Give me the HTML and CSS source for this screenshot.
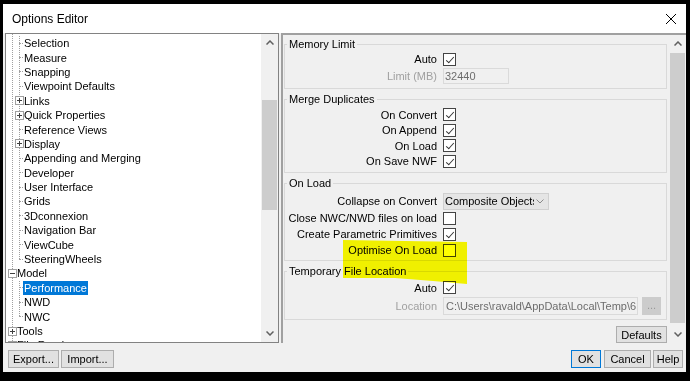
FILE: index.html
```html
<!DOCTYPE html>
<html lang="en">
<head>
  <meta charset="UTF-8" />
  <title>Options Editor</title>
  <link rel="stylesheet" href="styles.css">
</head>
<body>

<div class="window">
  <div class="titlebar">
    <span class="title">Options Editor</span>
    <svg class="close" width="10" height="10" viewBox="0 0 10 10">
      <path d="M0 0L10 10M10 0L0 10" stroke="#000" stroke-width="1" fill="none"/>
    </svg>
  </div>

  <div class="main">
    <div class="tree-panel">
      <div class="tree">
        <div class="children">
          <div class="row leaf">Selection</div>
          <div class="row leaf">Measure</div>
          <div class="row leaf">Snapping</div>
          <div class="row leaf">Viewpoint Defaults</div>
          <div class="row node"><span class="box plus"></span>Links</div>
          <div class="row node"><span class="box plus"></span>Quick Properties</div>
          <div class="row leaf">Reference Views</div>
          <div class="row node"><span class="box plus"></span>Display</div>
          <div class="row leaf">Appending and Merging</div>
          <div class="row leaf">Developer</div>
          <div class="row leaf">User Interface</div>
          <div class="row leaf">Grids</div>
          <div class="row leaf">3Dconnexion</div>
          <div class="row leaf">Navigation Bar</div>
          <div class="row leaf">ViewCube</div>
          <div class="row leaf">SteeringWheels</div>
        </div>
        <div class="row top"><span class="box minus"></span>Model</div>
        <div class="children">
          <div class="row leaf"><span class="sel">Performance</span></div>
          <div class="row leaf">NWD</div>
          <div class="row leaf">NWC</div>
        </div>
        <div class="row top"><span class="box plus"></span>Tools</div>
        <div class="row top"><span class="box plus"></span>File Readers</div>
      </div>
      <div class="vscroll">
        <div class="arrow">
          <svg width="8" height="5" viewBox="0 0 8 5"><polyline points="0.5,4.5 4,1 7.5,4.5" fill="none" stroke="#606060" stroke-width="1.5"/></svg>
        </div>
        <div class="thumb tree-thumb"></div>
        <div class="arrow down">
          <svg width="8" height="5" viewBox="0 0 8 5"><polyline points="0.5,0.5 4,4 7.5,0.5" fill="none" stroke="#606060" stroke-width="1.5"/></svg>
        </div>
      </div>
    </div>

    <div class="options-panel">
      <div class="options">
        <fieldset class="group memory">
          <legend>Memory Limit</legend>
          <div class="opt h16"><span class="lbl">Auto</span><span class="cb on"></span></div>
          <div class="opt h18"><span class="lbl off">Limit (MB)</span><span class="field short">32440</span></div>
        </fieldset>

        <fieldset class="group merge">
          <legend>Merge Duplicates</legend>
          <div class="opt"><span class="lbl">On Convert</span><span class="cb on"></span></div>
          <div class="opt"><span class="lbl">On Append</span><span class="cb on"></span></div>
          <div class="opt"><span class="lbl">On Load</span><span class="cb on"></span></div>
          <div class="opt"><span class="lbl">On Save NWF</span><span class="cb on"></span></div>
        </fieldset>

        <fieldset class="group onload">
          <legend>On Load</legend>
          <div class="opt h18">
            <span class="lbl">Collapse on Convert</span>
            <span class="select">
              <span class="select-text">Composite Objects</span>
              <svg width="8" height="5" viewBox="0 0 8 5"><polyline points="0.5,0.5 4,4 7.5,0.5" fill="none" stroke="#8a8a8a" stroke-width="1"/></svg>
            </span>
          </div>
          <div class="opt h16"><span class="lbl">Close NWC/NWD files on load</span><span class="cb"></span></div>
          <div class="opt h16"><span class="lbl">Create Parametric Primitives</span><span class="cb on"></span></div>
          <div class="opt h16"><span class="lbl">Optimise On Load</span><span class="cb"></span></div>
        </fieldset>

        <fieldset class="group temp">
          <legend>Temporary File Location</legend>
          <div class="opt h17"><span class="lbl">Auto</span><span class="cb on"></span></div>
          <div class="opt h20">
            <span class="lbl off">Location</span>
            <span class="field long">C:\Users\ravald\AppData\Local\Temp\6</span>
            <span class="browse">...</span>
          </div>
        </fieldset>

        <div class="defaults-row">
          <button class="btn defaults">Defaults</button>
        </div>
      </div>
      <div class="vscroll">
        <div class="arrow">
          <svg width="8" height="5" viewBox="0 0 8 5"><polyline points="0.5,4.5 4,1 7.5,4.5" fill="none" stroke="#606060" stroke-width="1.5"/></svg>
        </div>
        <div class="thumb options-thumb"></div>
        <div class="arrow down">
          <svg width="8" height="5" viewBox="0 0 8 5"><polyline points="0.5,0.5 4,4 7.5,0.5" fill="none" stroke="#606060" stroke-width="1.5"/></svg>
        </div>
      </div>
    </div>
  </div>

  <div class="footer">
    <button class="btn export">Export...</button>
    <button class="btn import">Import...</button>
    <span class="spacer"></span>
    <button class="btn ok">OK</button>
    <button class="btn cancel">Cancel</button>
    <button class="btn help">Help</button>
  </div>
</div>

<!-- yellow marker drawn over the screenshot -->
<svg class="highlight" width="125" height="46" viewBox="0 0 125 46">
  <polygon points="0,1 124,3 124,45 90,42 52,39 0,39" fill="#ffff00"/>
</svg>

</body>
</html>
```

FILE: styles.css
```css
* {
  box-sizing: border-box;
}

body {
  margin: 0;
  background: #000;
  font-family: "Liberation Sans", Arial, sans-serif;
  font-size: 11px;
  color: #000;
  position: relative;
}

.window {
  width: 683px;
  margin: 4px 4px 0 3px;
  background: #f0f0f0;
}

/* title bar */
.titlebar {
  height: 29px;
  background: #fff;
  display: flex;
  align-items: center;
  padding: 0 10px 0 9px;
}

.title {
  font-size: 12px;
  flex: 1;
}

/* main area */
.main {
  height: 310px;
  display: flex;
  padding-left: 2px;
}

.tree-panel {
  width: 274px;
  border: 1px solid #828282;
  background: #fff;
  display: flex;
  margin-right: 2px;
}

.tree {
  flex: 1;
  overflow: hidden;
  padding-top: 2px;
  background: repeating-linear-gradient(to bottom, #a0a0a0 0 1px, transparent 1px 2px) 6px 0 / 1px 100% no-repeat;
}

.children {
  background: repeating-linear-gradient(to bottom, #a0a0a0 0 1px, transparent 1px 2px) 13px 0 / 1px calc(100% - 7px) no-repeat;
}

.row {
  height: 14.4px;
  display: flex;
  align-items: center;
  white-space: nowrap;
}

.row.leaf::before {
  content: "";
  width: 4px;
  border-top: 1px dotted #a0a0a0;
  margin: 0 1px 0 13px;
}

.row.node {
  padding-left: 9px;
}

.row.top {
  padding-left: 2px;
}

.box {
  width: 9px;
  height: 9px;
  border: 1px solid #a0a0a0;
  background-color: #fff;
  margin-right: 0;
}

.box.plus {
  background-image: linear-gradient(#404040, #404040), linear-gradient(#404040, #404040);
  background-size: 5px 1px, 1px 5px;
  background-position: center, center;
  background-repeat: no-repeat;
}

.box.minus {
  background-image: linear-gradient(#404040, #404040);
  background-size: 5px 1px;
  background-position: center;
  background-repeat: no-repeat;
}

.sel {
  background: #0078d7;
  color: #fff;
  margin-left: -1px;
  padding: 0 1px;
  line-height: 14px;
}

/* scrollbars */
.vscroll {
  width: 17px;
  background: #f0f0f0;
  display: flex;
  flex-direction: column;
}

.arrow {
  height: 17px;
  display: flex;
  align-items: center;
  justify-content: center;
}

.arrow.down {
  margin-top: auto;
}

.thumb {
  background: #cdcdcd;
  margin: 0 1px;
}

.tree-thumb {
  margin-top: 49px;
  height: 110px;
}

.options-thumb {
  margin-top: 1px;
  height: 270px;
}

/* options panel */
.options-panel {
  width: 405px;
  border-top: 2px solid #a0a0a0;
  border-left: 2px solid #a0a0a0;
  display: flex;
}

.options {
  flex: 1;
  display: flex;
  flex-direction: column;
  padding-top: 2px;
}

.group {
  margin: 3px 2px 0 1px;
  padding: 0 0 3px 2px;
  border: 1px solid #d9d9d9;
  min-width: 0;
}

.group.memory {
  margin-top: 0;
}

.group legend {
  padding: 0 2px;
  line-height: 14px;
}

.group.merge {
  padding-top: 1px;
}

.group.onload {
  padding-top: 2px;
  padding-bottom: 2px;
}

.group.temp {
  padding-top: 1px;
}

.opt {
  display: flex;
  align-items: center;
  height: 15.5px;
  white-space: nowrap;
}

.opt.h16 { height: 16px; }
.opt.h17 { height: 17px; }
.opt.h18 { height: 18px; }
.opt.h20 { height: 20px; }

.lbl {
  width: 150px;
  text-align: right;
  margin-right: 6px;
}

.lbl.off {
  color: #a0a0a0;
}

.cb {
  width: 13px;
  height: 13px;
  border: 1px solid #444;
  background: #fff;
  display: flex;
  justify-content: center;
}

.cb.on::after {
  content: "";
  width: 3px;
  height: 7px;
  border: solid #333;
  border-width: 0 1px 1px 0;
  transform: rotate(42deg);
  margin-top: 1px;
}

.field {
  height: 16px;
  border: 1px solid #dadada;
  background: #f0f0f0;
  color: #6d6d6d;
  padding-left: 1px;
  line-height: 14px;
  overflow: hidden;
}

.field.short {
  width: 66px;
}

.field.long {
  width: 195px;
  height: 18px;
  line-height: 16px;
  padding-left: 2px;
}

.browse {
  width: 19px;
  height: 18px;
  margin-left: 4px;
  background: #cccccc;
  color: #9a9a9a;
  text-align: center;
  line-height: 16px;
}

.select {
  width: 106px;
  height: 17px;
  border: 1px solid #d0d0d0;
  background: #e5e5e5;
  display: flex;
  align-items: center;
  padding-left: 1px;
}

.select-text {
  flex: 1;
  overflow: hidden;
}

.select svg {
  margin: 0 4px 0 2px;
}

.defaults-row {
  margin-top: auto;
  display: flex;
  justify-content: flex-end;
  padding-right: 2px;
}

/* buttons */
.btn {
  font-family: inherit;
  font-size: 11px;
  color: #000;
  height: 18px;
  padding: 0;
  background: #e1e1e1;
  border: 1px solid #adadad;
}

.defaults {
  width: 51px;
  height: 17px;
}

.footer {
  height: 29px;
  display: flex;
  align-items: center;
  padding: 2px 3px 0 5px;
  gap: 2px;
}

.spacer {
  flex: 1;
}

.export { width: 51px; }
.import { width: 53px; }
.ok { width: 30px; border-color: #0078d7; margin-right: 1px; }
.cancel { width: 47px; }
.help { width: 30px; }

/* marker overlay */
.highlight {
  position: absolute;
  left: 343px;
  top: 239px;
  mix-blend-mode: multiply;
}
```
